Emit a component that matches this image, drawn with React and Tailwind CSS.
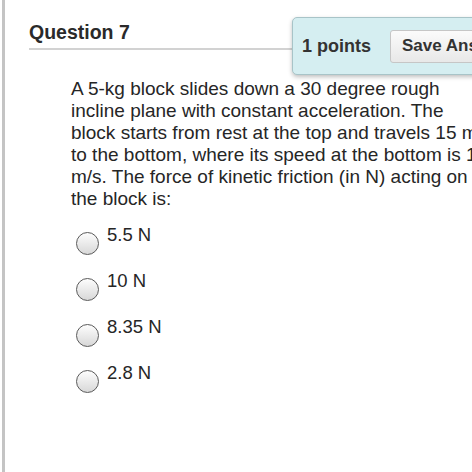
const options = ['5.5 N', '10 N', '8.35 N', '2.8 N'];

const lines = [
  'A 5-kg block slides down a 30 degree rough',
  'incline plane with constant acceleration. The',
  'block starts from rest at the top and travels 15 m',
  'to the bottom, where its speed at the bottom is 1',
  'm/s. The force of kinetic friction (in N) acting on',
  'the block is:',
];

export default function App() {
  return (
    <div
      className="relative w-[472px] h-[472px] overflow-hidden bg-white text-[#2b2b2b]"
      style={{ fontFamily: '"Liberation Sans", Arial, sans-serif' }}
    >
      <div className="absolute left-[2px] top-0 bottom-0 w-[3px] bg-[#c4c4c4]"></div>

      <div className="pl-[29px] pt-[20px]">
        <div className="w-[263px] border-b-2 border-[#d2d2d2] pb-[4px]">
          <h2 className="text-[19.5px] leading-[24px] font-bold text-[#2a2a2a]">Question 7</h2>
        </div>
      </div>

      {/* points panel */}
      <div className="absolute left-[292px] top-[17px] w-[220px] h-[58px] rounded-[5px] border border-[#a8c4c8] bg-[#d5eef1] shadow-[0_2px_4px_rgba(0,0,0,0.25)] flex items-center pl-[9px] gap-[19px] whitespace-nowrap">
        <span className="shrink-0 text-[18px] font-bold text-[#333]">1 points</span>
        <button className="shrink-0 h-[33px] px-[11px] rounded-[3px] border border-[#c6c6c6] bg-gradient-to-b from-[#fbfbfb] to-[#e8e8e8] text-[17px] font-bold text-[#333]">
          Save Answer
        </button>
      </div>

      <div className="pl-[71px] pt-[28px]">
        <p className="text-[19px] leading-[22px] text-[#262626] whitespace-nowrap">
          {lines.map((l) => (
            <span key={l} className="block">{l}</span>
          ))}
        </p>
      </div>

      <div className="pl-[76px] pt-[14px] flex flex-col gap-[14px]">
        {options.map((opt) => (
          <label key={opt} className="h-[32px] flex items-start gap-[8px]">
            <span className="mt-[8px] w-[23px] h-[23px] rounded-full border-[1.5px] border-[#5a5a5a] bg-gradient-to-b from-[#fdfdfd] to-[#d8d8d8]"></span>
            <span className="text-[18.5px] leading-[22px] text-[#262626]">{opt}</span>
          </label>
        ))}
      </div>
    </div>
  );
}
